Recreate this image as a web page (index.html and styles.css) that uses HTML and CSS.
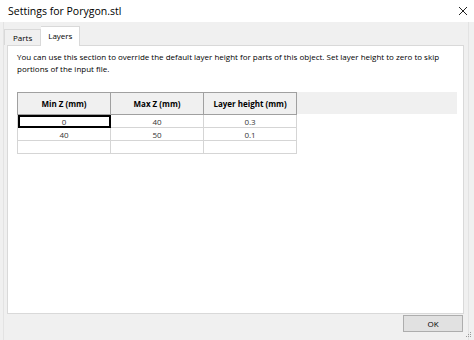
FILE: index.html
```html
<!DOCTYPE html>
<html lang="en">
<head>
    <meta charset="UTF-8">
    <title>Settings for Porygon.stl</title>
    <link rel="stylesheet" href="styles.css">
</head>
<body>
    <div class="titlebar">
        <span class="title">Settings for Porygon.stl</span>
        <svg class="close" width="10" height="10" viewBox="0 0 10 10">
            <path d="M1 1 L9 9 M9 1 L1 9" stroke="#222" stroke-width="1" fill="none"/>
        </svg>
    </div>

    <div class="frame">
        <div class="tabs">
            <div class="tab">Parts</div>
            <div class="tab active">Layers</div>
        </div>

        <div class="panel">
            <p class="intro">You can use this section to override the default layer height for parts of this object. Set layer height to zero to skip portions of the input file.</p>

            <div class="grid">
                <table>
                    <thead>
                        <tr>
                            <th>Min Z (mm)</th>
                            <th>Max Z (mm)</th>
                            <th>Layer height (mm)</th>
                        </tr>
                    </thead>
                    <tbody>
                        <tr><td class="selected">0</td><td>40</td><td>0.3</td></tr>
                        <tr><td>40</td><td>50</td><td>0.1</td></tr>
                        <tr><td></td><td></td><td></td></tr>
                    </tbody>
                </table>
            </div>
        </div>

        <div class="footer">
            <button class="ok">OK</button>
        </div>
    </div>

    <svg class="grip" width="6" height="6" viewBox="0 0 6 6">
        <rect x="4" y="0" width="1" height="1" fill="#9a9a9a"/>
        <rect x="2" y="2" width="1" height="1" fill="#9a9a9a"/>
        <rect x="4" y="2" width="1" height="1" fill="#9a9a9a"/>
        <rect x="0" y="4" width="1" height="1" fill="#9a9a9a"/>
        <rect x="2" y="4" width="1" height="1" fill="#9a9a9a"/>
        <rect x="4" y="4" width="1" height="1" fill="#9a9a9a"/>
    </svg>
</body>
</html>
```

FILE: styles.css
```css
body {
    margin: 0;
    width: 474px;
    height: 340px;
    background-color: #f0f0f0;
    font-family: "Open Sans", "Noto Sans", sans-serif;
    font-size: 8px;
    color: #000;
    position: relative;
    overflow: hidden;
}
.titlebar {
    height: 22px;
    background-color: #fff;
    display: flex;
    align-items: center;
    justify-content: space-between;
    padding: 0 6px 0 8px;
}
.title {
    font-size: 10.5px;
    color: #000;
}
.close {
    display: block;
}
.frame {
    margin: 0 5px 0 3px;
    height: 318px;
    border-left: 1px solid #e3e3e3;
    border-right: 1px solid #e3e3e3;
    padding: 0 4px 0 3px;
    display: flex;
    flex-direction: column;
}
.tabs {
    display: flex;
    height: 23px;
    align-items: flex-end;
    margin-left: -3px;
    position: relative;
    z-index: 1;
}
.tab {
    height: 15px;
    padding: 0 8px;
    line-height: 15px;
    border: 1px solid #d9d9d9;
    border-bottom: none;
    background-color: #f0f0f0;
    font-size: 8px;
}
.tab.active {
    background-color: #fff;
    height: 19px;
    line-height: 17px;
    margin-bottom: -1px;
    border-left: none;
    padding: 0 7px;
}
.panel {
    height: 262px;
    background-color: #fff;
    border: 1px solid #d9d9d9;
    padding: 5px 9px 0;
}
.intro {
    margin: 0 0 17px;
    line-height: 12px;
    font-size: 8px;
}
.grid {
    width: 440px;
    background: linear-gradient(#f0f0f0 0 22px, transparent 22px);
}
table {
    border-collapse: collapse;
    table-layout: fixed;
}
th, td {
    width: 92px;
    text-align: center;
    padding: 0;
    font-size: 8px;
}
th {
    height: 21px;
    background-color: #f0f0f0;
    border: 1px solid #a0a0a0;
    font-weight: bold;
}
td {
    height: 12px;
    border: 1px solid #d5d5d5;
    color: #333;
}
td.selected {
    outline: 2px solid #000;
    outline-offset: -2px;
}
.footer {
    display: flex;
    justify-content: flex-end;
    padding-top: 1px;
}
.ok {
    width: 60px;
    height: 17px;
    margin-right: 1px;
    background-color: #e1e1e1;
    border: 1px solid #adadad;
    font-family: "Open Sans", "Noto Sans", sans-serif;
    font-size: 8px;
    padding: 0;
    color: #000;
}
.grip {
    position: absolute;
    right: 2px;
    bottom: 2px;
}
```
